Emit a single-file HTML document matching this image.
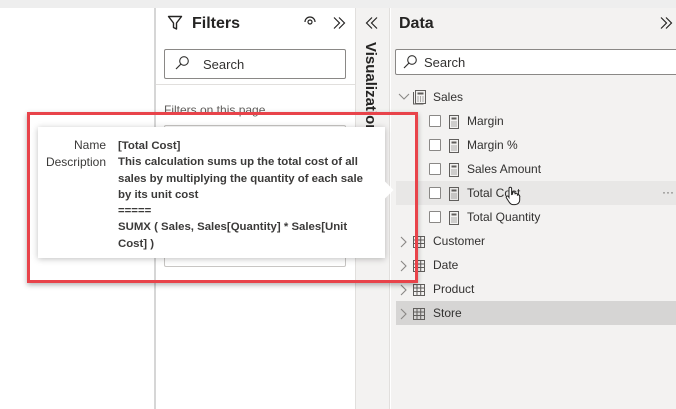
<!DOCTYPE html>
<html><head><meta charset="utf-8"><style>
*{margin:0;padding:0;box-sizing:border-box}
body{width:676px;height:409px;overflow:hidden;background:#fff;font-family:"Liberation Sans",sans-serif;position:relative;color:#252423}
.a{position:absolute}
.t{font-size:12px;color:#323130;white-space:nowrap}
.cb{position:absolute;width:12px;height:12px;border:1px solid #8a8886;background:#fff;border-radius:1px}
</style></head><body>
<div class="a" style="left:0;top:0;width:676px;height:8px;background:#eeeeee"></div>
<div class="a" style="left:154px;top:8px;width:2px;height:401px;background:#d6d6d6"></div>
<!-- filters -->
<svg class="a" style="left:167px;top:15px" width="16" height="16" viewBox="0 0 16 16"><path d="M1.5 1.5h13L9.5 8v6l-3-1.5V8z" fill="none" stroke="#252423" stroke-width="1.4" stroke-linejoin="round"/></svg>
<div class="a" style="left:192px;top:15px;font-size:16px;font-weight:bold;color:#252423">Filters</div>
<svg class="a" style="left:303px;top:15px" width="14" height="12" viewBox="0 0 14 12"><path d="M2 7a5 5 0 0 1 10 0" fill="none" stroke="#252423" stroke-width="1.2"/><circle cx="7" cy="7" r="2" fill="none" stroke="#252423" stroke-width="1.2"/></svg>
<svg class="a" style="left:332px;top:16px" width="14" height="14" viewBox="0 0 14 14"><path d="M2 1.5l5.5 5.5L2 12.5M7 1.5l5.5 5.5L7 12.5" fill="none" stroke="#252423" stroke-width="1.2"/></svg>
<div class="a" style="left:164px;top:49px;width:182px;height:30px;border:1px solid #8a8886;border-radius:2px"></div>
<svg class="a" style="left:174px;top:55px" width="16" height="16" viewBox="0 0 16 16"><circle cx="10" cy="6" r="4.3" fill="none" stroke="#323130" stroke-width="1.1"/><path d="M7 9l-5 5" stroke="#323130" stroke-width="1.2"/></svg>
<div class="a t" style="left:203px;top:57px;font-size:13px">Search</div>
<div class="a" style="left:156px;top:84px;width:199px;height:1px;background:#e1dfdd"></div>
<div class="a t" style="left:164px;top:103px;font-size:12px;color:#605e5c">Filters on this page</div>
<div class="a" style="left:164px;top:125px;width:182px;height:142px;border:1px solid #c8c6c4;border-radius:2px"></div>
<!-- vis strip -->
<div class="a" style="left:355px;top:8px;width:35px;height:401px;background:#f3f2f1;border-left:1px solid #e1dfdd;border-right:1px solid #e1dfdd"></div>
<svg class="a" style="left:365px;top:16px" width="14" height="14" viewBox="0 0 14 14"><path d="M12 1.5L6.5 7l5.5 5.5M7 1.5L1.5 7 7 12.5" fill="none" stroke="#252423" stroke-width="1.2"/></svg>
<div class="a" style="left:379px;top:42px;transform-origin:0 0;transform:rotate(90deg);font-size:15px;font-weight:bold;color:#252423;white-space:nowrap">Visualizations</div>
<!-- data -->
<div class="a" style="left:391px;top:8px;width:285px;height:401px;background:#f3f2f1"></div>
<div class="a" style="left:399px;top:15px;font-size:16px;font-weight:bold;color:#252423">Data</div>
<svg class="a" style="left:659px;top:16px" width="14" height="14" viewBox="0 0 14 14"><path d="M2 1.5l5.5 5.5L2 12.5M7 1.5l5.5 5.5L7 12.5" fill="none" stroke="#252423" stroke-width="1.2"/></svg>
<div class="a" style="left:395px;top:49px;width:290px;height:26px;border:1px solid #8a8886;border-radius:2px;background:#fff"></div>
<svg class="a" style="left:402px;top:54px" width="16" height="16" viewBox="0 0 16 16"><circle cx="10" cy="6" r="4.3" fill="none" stroke="#323130" stroke-width="1.1"/><path d="M7 9l-5 5" stroke="#323130" stroke-width="1.2"/></svg>
<div class="a t" style="left:424px;top:55px;font-size:13px">Search</div>
<div class="a" style="left:396px;top:181px;width:280px;height:24px;background:#e8e7e6"></div>
<div class="a" style="left:396px;top:301px;width:280px;height:24px;background:#d6d5d4"></div>
<svg class="a" style="left:398px;top:92px" width="12" height="10"><path d="M1 2l5 5 5-5" fill="none" stroke="#8a8886" stroke-width="1.1"/></svg>
<svg class="a" style="left:412px;top:89px" width="16" height="16" viewBox="0 0 16 16"><rect x="3.5" y="1.5" width="10" height="13" fill="none" stroke="#605e5c"/><path d="M1.5 3v12h10" fill="none" stroke="#605e5c"/><rect x="5.5" y="3.5" width="6" height="2" fill="#605e5c"/><path d="M5.5 8h1M8 8h1M10.5 8h1M5.5 10h1M8 10h1M10.5 10h1M5.5 12h1M8 12h1M10.5 12h1" stroke="#605e5c"/></svg>
<div class="a t" style="left:433px;top:90px">Sales</div>
<div id="items"></div>
<div class="a" style="left:662px;top:185px;font-size:12px;color:#605e5c">···</div>
<!-- tooltip -->
<div class="a" style="left:38px;top:127px;width:347px;height:131px;background:#fff;box-shadow:0 1px 6px rgba(0,0,0,0.25)"></div>
<div class="a" style="left:379px;top:184px;width:12px;height:12px;background:#fff;transform:rotate(45deg)"></div>
<div class="a t" style="left:40px;top:138px;width:66px;text-align:right;color:#3b3a39">Name</div>
<div class="a t" style="left:40px;top:155px;width:66px;text-align:right;color:#3b3a39">Description</div>
<div class="a" style="left:118px;top:138px;font-size:11.4px;line-height:16.3px;font-weight:bold;color:#3b3a39;width:262px;white-space:nowrap">[Total Cost]<br>This calculation sums up the total cost of all<br>sales by multiplying the quantity of each sale<br>by its unit cost<br>=====<br>SUMX ( Sales, Sales[Quantity] * Sales[Unit<br>Cost] )</div>
<!-- red box -->
<div class="a" style="left:27px;top:112px;width:391px;height:171px;border:3px solid #e8434a;box-shadow:0 2px 5px rgba(0,0,0,0.3)"></div>
<script>
var h='';var it=['Margin','Margin %','Sales Amount','Total Cost','Total Quantity'];
it.forEach(function(n,i){var y=114+i*24;
h+='<div class="cb" style="left:429px;top:'+(y+1)+'px"></div>';
h+='<svg class="a" style="left:448px;top:'+y+'px" width="12" height="16" viewBox="0 0 12 16"><rect x="1.5" y="1.5" width="9" height="13" fill="none" stroke="#605e5c"/><rect x="3.5" y="3.5" width="5" height="2" fill="#605e5c"/><path d="M3.5 8h1M5.5 8h1M7.5 8h1M3.5 10h1M5.5 10h1M7.5 10h1M3.5 12h1M5.5 12h1M7.5 12h1" stroke="#605e5c"/></svg>';
h+='<div class="a t" style="left:467px;top:'+y+'px">'+n+'</div>';});
['Customer','Date','Product','Store'].forEach(function(n,i){var y=234+i*24;
h+='<svg class="a" style="left:399px;top:'+(y+1)+'px" width="8" height="14"><path d="M2 2l5 5-5 5" fill="none" stroke="#8a8886" stroke-width="1.1"/></svg>';
h+='<svg class="a" style="left:412px;top:'+(y+1)+'px" width="14" height="14" viewBox="0 0 14 14"><rect x="1.5" y="1.5" width="11" height="11" fill="none" stroke="#605e5c"/><path d="M1.5 5h11M1.5 8.5h11M5 1.5v11M8.7 1.5v11" stroke="#605e5c"/></svg>';
h+='<div class="a t" style="left:433px;top:'+y+'px">'+n+'</div>';});
document.getElementById('items').innerHTML=h;
</script>
<svg class="a" style="left:505px;top:186px" width="16" height="20" viewBox="0 0 16 20"><path d="M4 2.5a1.3 1.3 0 0 1 2.6 0v6l1-.4v-1a1.2 1.2 0 0 1 2.4 0v1.2a1.2 1.2 0 0 1 2.4.3v1a1.2 1.2 0 0 1 2.3.5v4c0 2.5-2 4.5-4.5 4.5H8c-1.6 0-2.6-.8-3.5-2L1.5 12a1.2 1.2 0 0 1 2-1.4L4 11.5z" fill="#fff" stroke="#252423" stroke-width="1"/></svg>
</body></html>
